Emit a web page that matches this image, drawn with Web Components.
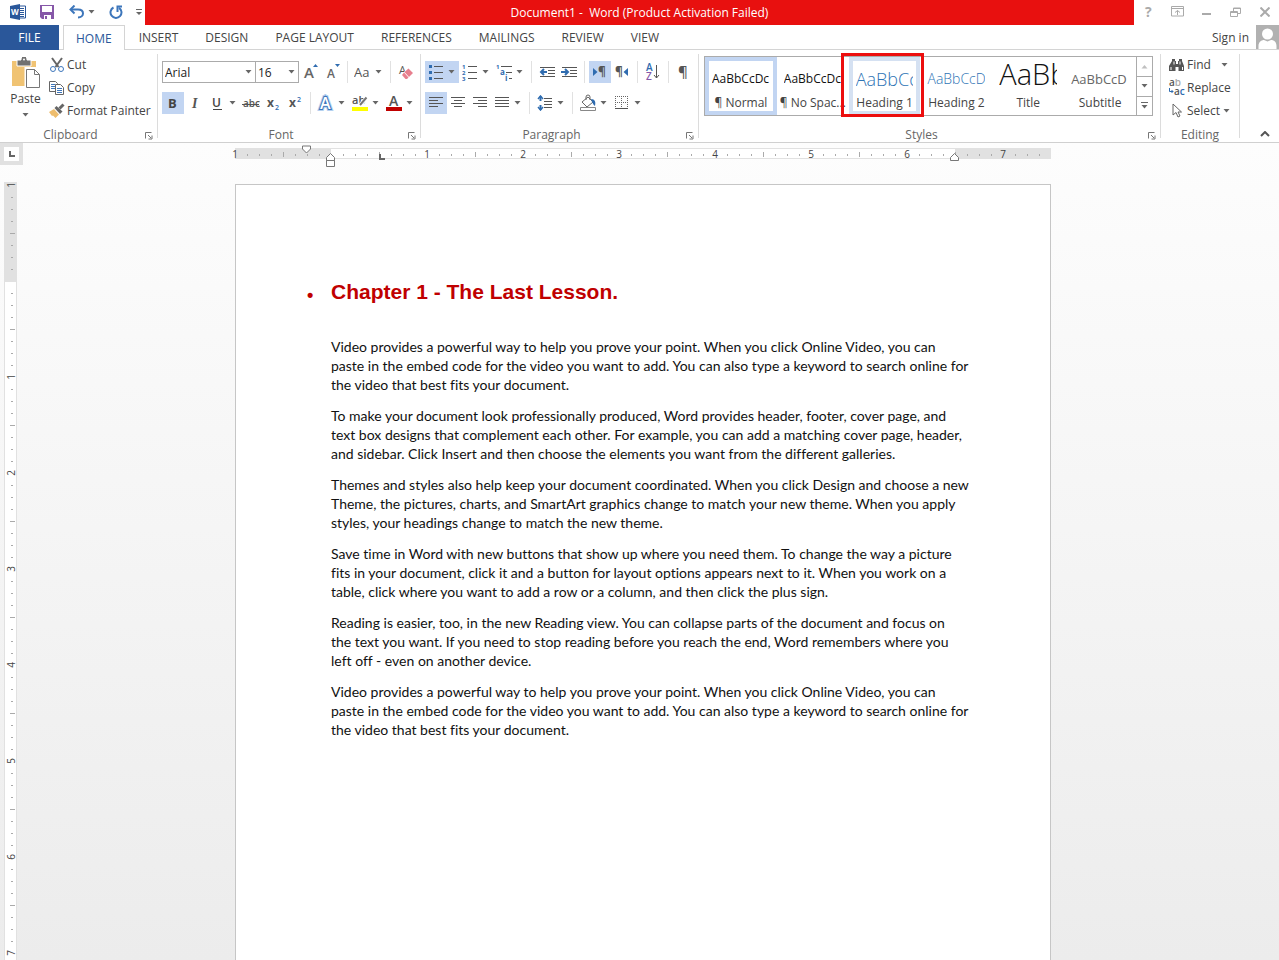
<!DOCTYPE html>
<html lang="en">
<head>
<meta charset="utf-8">
<title>Document1 - Word</title>
<style>
  html, body {
    margin: 0;
    height: 100%;
    overflow: hidden;
  }
  body {
    font-family: "Open Sans", "Noto Sans", sans-serif;
    font-size: 12px;
    color: #444;
    background: #fff;
  }
</style>
</head>
<body>
<word-window>
  <document-page>
    <span slot="heading">Chapter 1 - The Last Lesson.</span>
    <p>Video provides a powerful way to help you prove your point. When you click Online Video, you can<br>paste in the embed code for the video you want to add. You can also type a keyword to search online for<br>the video that best fits your document.</p>
    <p>To make your document look professionally produced, Word provides header, footer, cover page, and<br>text box designs that complement each other. For example, you can add a matching cover page, header,<br>and sidebar. Click Insert and then choose the elements you want from the different galleries.</p>
    <p>Themes and styles also help keep your document coordinated. When you click Design and choose a new<br>Theme, the pictures, charts, and SmartArt graphics change to match your new theme. When you apply<br>styles, your headings change to match the new theme.</p>
    <p>Save time in Word with new buttons that show up where you need them. To change the way a picture<br>fits in your document, click it and a button for layout options appears next to it. When you work on a<br>table, click where you want to add a row or a column, and then click the plus sign.</p>
    <p>Reading is easier, too, in the new Reading view. You can collapse parts of the document and focus on<br>the text you want. If you need to stop reading before you reach the end, Word remembers where you<br>left off - even on another device.</p>
    <p>Video provides a powerful way to help you prove your point. When you click Online Video, you can<br>paste in the embed code for the video you want to add. You can also type a keyword to search online for<br>the video that best fits your document.</p>
  </document-page>
</word-window>

<script>
(function() {
  // name: [width, height, svg content]
  const ICONS = {
    word: [16, 16, `<path d="M9 2h6.5v12H9z" fill="#fff" stroke="#2a579a"/><path d="M10 4.5h4M10 6.5h4M10 8.5h4M10 10.5h4M10 12.5h4" stroke="#2a579a"/><path d="M0 2l10-2v16L0 14z" fill="#2a579a"/><text x="1" y="11" font-size="8" font-weight="700" fill="#fff">W</text>`],
    save: [14, 14, `<path d="M0 0h14v14H2l-2-2z" fill="#8657a8"/><path d="M2 1h10v6H2zM4 10h7v4H4z" fill="#fff"/><path d="M5 11h2v3H5z" fill="#8657a8"/>`],
    undo: [16, 14, `<path d="M2 4.500h7c3.500 0 5 2 5 4s-2 4-5 4" fill="none" stroke="#3d76bb" stroke-width="2"/><path d="M5.500 0.500L1.500 4.500l4 4" fill="none" stroke="#3d76bb" stroke-width="2"/>`],
    redo: [14, 14, `<path d="M4.500 2.500a5.500 5.500 0 1 0 5.500 .3" fill="none" stroke="#3d76bb" stroke-width="2"/><path d="M13 1.500H8.500V7" fill="none" stroke="#3d76bb" stroke-width="2"/>`],
    customize: [7, 8, `<path d="M0 1.500h6" stroke="#666"/><path d="M0 4h6L3 7z" fill="#666"/>`],
    help: [12, 20, `<text x="2" y="15" font-size="14" font-weight="700" fill="#aaa">?</text>`],
    display: [13, 11, `<path d="M.5.5h12v9.500H.5zM.5 2.500h12" fill="none" stroke="#aaa"/><path d="M6.500 9V4.500M4 6.500l2.500-2 2.500 2" fill="none" stroke="#aaa"/>`],
    minimize: [10, 10, `<path d="M0 7h9" stroke="#aaa" stroke-width="2"/>`],
    restore: [11, 10, `<path d="M.5 4.500h7v5h-7zM.5 5.500h7M3.500 4V1h7v5.500H8M3.500 1.500h7" fill="none" stroke="#aaa"/>`],
    close: [10, 10, `<path d="M.5.500l9 9m0-9l-9 9" stroke="#aaa" stroke-width="2"/>`],
    avatar: [23, 24, `<path d="M0 0h23v24H0z" fill="#b1b1b1"/><circle cx="11.500" cy="9" r="5.500" fill="#fff"/><path d="M2.500 24v-3c0-4 3-6 5.500-6l3.500 1.500L15 15c3 0 5.500 2 5.500 6v3z" fill="#fff"/>`],
    paste: [30, 32, `<path d="M1 4h24v25H1z" fill="#f0c373"/><path d="M6 3h4V2a2.500 2.500 0 0 1 6 0v1h4v6H6z" fill="#717171" stroke="#fff"/><circle cx="13" cy="2.500" r="1" fill="#fff"/><path d="M15 11.500h9l5 5v14H15z" fill="#fff" stroke="#fff" stroke-width="3"/><path d="M15.500 12.500h8l5 5v13h-13zM23.500 12.500v5h5" fill="#fff" stroke="#777"/>`],
    cut: [16, 16, `<path d="M3 1l6.500 9M13 1L6.500 10" stroke="#666" stroke-width="2"/><circle cx="4" cy="12" r="2.500" fill="none" stroke="#3d76bb"/><circle cx="12" cy="12" r="2.500" fill="none" stroke="#3d76bb"/>`],
    copy: [16, 16, `<path d="M.500 1.500h6l2 2v8h-8z" fill="#fff" stroke="#666"/><path d="M2 4.500h4M2 6.500h4M2 8.500h4" stroke="#3d76bb"/><path d="M6.500 4.500h5l3 3v7h-8z" fill="#fff" stroke="#666"/><path d="M8 8.500h5M8 10.500h5M8 12.500h5" stroke="#3d76bb"/>`],
    painter: [16, 16, `<path d="M0 9l5-3 5 5.500L6.500 15 4 12.500l-1 .500z" fill="#eebd6d"/><path d="M5.500 5l2-2 6 5.500-2.500 2.500z" fill="#666"/><path d="M10.500 5.500l4-4" stroke="#666" stroke-width="3"/>`],
    grow: [18, 18, `<text x="3" y="15" font-size="15" font-weight="600" fill="#666">A</text><path d="M12 4h5l-2.500-3z" fill="#2f6cb0"/>`],
    shrink: [18, 18, `<text x="4" y="15" font-size="12" font-weight="600" fill="#666">A</text><path d="M12 1h5l-2.500 3z" fill="#2f6cb0"/>`],
    changecase: [18, 18, `<text x="0" y="14" font-size="13" fill="#555">Aa</text>`],
    eraser: [16, 16, `<text x="1" y="10" font-size="11" fill="#555">A</text><path d="M10 4l5 4-6 7-5-5z" fill="#fff"/><path d="M10.500 4.500l4.500 4.500-4 4-4.500-5zM6 8.500L10.500 13.500 9 15H7.500L4 11z" fill="#e77f8e"/>`],
    bold: [16, 16, `<text x="3" y="13" font-size="13" font-weight="700" fill="#444">B</text>`],
    italic: [16, 16, `<text x="5" y="13" font-size="14" font-style="italic" font-family="Liberation Serif" font-weight="700" fill="#555">I</text>`],
    underline: [16, 16, `<text x="3" y="12" font-size="12" font-weight="600" fill="#444">U</text><path d="M4 14.500h9" stroke="#444"/>`],
    strike: [18, 16, `<text x="1" y="12" font-size="10" font-weight="600" fill="#555">abc</text><path d="M0 9.500h17" stroke="#555"/>`],
    sub: [16, 18, `<text x="2" y="13" font-size="12" font-weight="700" fill="#555">x</text><text x="10" y="16" font-size="7" font-weight="600" fill="#2f6cb0">2</text>`],
    sup: [16, 16, `<text x="2" y="12" font-size="12" font-weight="700" fill="#555">x</text><text x="10" y="7" font-size="7" font-weight="600" fill="#2f6cb0">2</text>`],
    effects: [18, 18, `<text x="3" y="15" font-size="16" font-weight="600" fill="#fff" stroke="#b5d0ef" stroke-width="4" paint-order="stroke">A</text><text x="3" y="15" font-size="16" font-weight="600" fill="#fff" stroke="#3d76bb" stroke-width="2" paint-order="stroke">A</text>`],
    highlight: [18, 18, `<text x="1" y="10" font-size="11" font-weight="600" fill="#555">ab</text><path d="M15.500 4L9 11" stroke="#fff" stroke-width="4"/><path d="M15.500 3.500L9 11" stroke="#777" stroke-width="2"/><path d="M1 13h16v4H1z" fill="#ff0"/>`],
    fontcolor: [18, 18, `<text x="4" y="12" font-size="14" font-weight="600" fill="#555">A</text><path d="M1 13h16v4H1z" fill="#c00000"/>`],
    bullets: [16, 16, `<path d="M1 1h3v3H1zM1 7h3v3H1zM1 13h3v3H1z" fill="#2f6cb0"/><path d="M6 2.500h9M6 8.500h9M6 14.500h9" stroke="#555"/>`],
    numbers: [16, 18, `<text x="0" y="6" font-size="6" font-weight="700" fill="#2f6cb0">1</text><text x="0" y="12" font-size="6" font-weight="700" fill="#2f6cb0">2</text><text x="0" y="18" font-size="6" font-weight="700" fill="#2f6cb0">3</text><path d="M6 3.500h9M6 9.500h9M6 15.500h9" stroke="#555"/>`],
    multilevel: [17, 18, `<text x="0" y="6" font-size="6" font-weight="700" fill="#2f6cb0">1</text><text x="4" y="12" font-size="8" font-weight="700" fill="#2f6cb0">a</text><text x="9" y="18" font-size="8" font-weight="700" fill="#2f6cb0">i</text><path d="M5 3.500h11M10 9.500h6M13 15.500h3" stroke="#555"/>`],
    outdent: [17, 12, `<path d="M1 1.500h15M9 4.500h7M9 7.500h7M1 10.500h15" stroke="#555"/><path d="M8 6H2M5 3L2 6l3 3" fill="none" stroke="#2f6cb0" stroke-width="2"/>`],
    indent: [17, 12, `<path d="M1 1.500h15M9 4.500h7M9 7.500h7M1 10.500h15" stroke="#555"/><path d="M0 6h6M4 3l3 3-3 3" fill="none" stroke="#2f6cb0" stroke-width="2"/>`],
    ltr: [16, 18, `<path d="M1 5l4.500 4L1 13z" fill="#2f6cb0"/><text x="6" y="13" font-size="12" font-weight="700" fill="#555">¶</text>`],
    rtl: [16, 18, `<path d="M14 5L9.500 9l4.500 4z" fill="#2f6cb0"/><text x="1" y="13" font-size="12" font-weight="700" fill="#555">¶</text>`],
    sort: [16, 18, `<text x="1" y="8" font-size="10" font-weight="600" fill="#2f6cb0">A</text><text x="1" y="17" font-size="10" font-weight="600" fill="#8657a8">Z</text><path d="M11.500 2v13M9 12l2.500 3 2.500-3" fill="none" stroke="#555"/>`],
    pilcrow: [14, 20, `<text x="1" y="15" font-size="15" font-weight="600" fill="#555">¶</text>`],
    left: [16, 12, `<path d="M1 .500h14M1 3.500h9M1 6.500h14M1 9.500h9" stroke="#555"/>`],
    center: [16, 12, `<path d="M1 .500h14M4 3.500h8M1 6.500h14M4 9.500h8" stroke="#555"/>`],
    right: [16, 12, `<path d="M1 .500h14M6 3.500h9M1 6.500h14M6 9.500h9" stroke="#555"/>`],
    justify: [16, 12, `<path d="M1 .500h14M1 3.500h14M1 6.500h14M1 9.500h14" stroke="#555"/>`],
    spacing: [16, 16, `<path d="M7 3.500h8M7 6.500h8M7 9.500h8M7 12.500h8" stroke="#555"/><path d="M3.500 1v5M3.500 10v5" stroke="#2f6cb0" stroke-width="2"/><path d="M1 4l2.500-3L6 4M1 12l2.500 3L6 12" fill="none" stroke="#2f6cb0" stroke-width="1.500"/>`],
    shading: [18, 18, `<path d="M3 8l6-5 5 5-6 5z" fill="#fff" stroke="#666"/><path d="M7 6V3a2 2 0 0 1 4 0v3" fill="none" stroke="#666"/><path d="M12 5c4 0 5 3 4 7-2-1-2-3-3-4z" fill="#2f6cb0"/><path d="M1.500 13.500h15v3h-15z" fill="#fff" stroke="#888"/>`],
    borders: [14, 14, `<path d="M.500 0v13M6.500 0v13M12.500 0v13M0 .500h13M0 6.500h13" stroke="#666" stroke-dasharray="1 1"/><path d="M0 12.500h13" stroke="#555"/>`],
    find: [16, 14, `<path d="M3 1h3v2h1v3h2V3h1V1h3v2l2 5v5H9.500V9h-3v4H0V8l3-5z" fill="#555"/><path d="M2 9v3M13.500 9v3M5 3.500v3M11 3.500v3" stroke="#fff"/>`],
    replace: [18, 18, `<text x="1" y="7" font-size="10" font-weight="600" fill="#555">a<tspan fill="#aaa">b</tspan></text><text x="6" y="16" font-size="10" font-weight="600" fill="#555">a<tspan fill="#2f6cb0">c</tspan></text><path d="M1.500 9v3.500H5M3.500 11L5 12.500 3.500 14" fill="none" stroke="#2f6cb0"/>`],
    select: [10, 15, `<path d="M1 1v11l3-2.500L6 14l2-1-2-4h3.500z" fill="#fff" stroke="#666"/>`],
    arrow: [7, 4, `<path d="M.500 0h6l-3 3.500z" fill="#666"/>`],
    uparrow: [7, 4, `<path d="M.500 3.500h6L3.500 0z" fill="#c0c0c0"/>`],
    more: [7, 7, `<path d="M0 .500h7" stroke="#666"/><path d="M.500 3h6l-3 3.500z" fill="#666"/>`],
    launcher: [8, 8, `<path d="M.500 6.500v-6h6" fill="none" stroke="#777"/><path d="M3 3l3 3M7 3.500V7H3.500" fill="none" stroke="#777"/>`],
    collapse: [10, 6, `<path d="M1 5l4-4 4 4" fill="none" stroke="#555" stroke-width="2"/>`],
    tabstop: [6, 6, `<path d="M1 0v5h5" fill="none" stroke="#666" stroke-width="2"/>`]
  };

  function icon(name) {
    const [w, h, body] = ICONS[name];
    return `<svg class="icon" width="${w}" height="${h}" viewBox="0 0 ${w} ${h}" aria-hidden="true">${body}</svg>`;
  }

  class Base extends HTMLElement {
    constructor() {
      super();
      this.attachShadow({ mode: "open" });
    }

    connectedCallback() {
      this.shadowRoot.innerHTML = `
        <style>
          * { box-sizing: border-box; }
          button {
            font: inherit;
            color: inherit;
            background: none;
            border: 0;
            padding: 0;
            margin: 0;
            cursor: pointer;
          }
          svg { display: block; flex: none; }
        </style>` + this.render();
    }
  }

  // Small ribbon button, optionally with a drop-down arrow
  class ToolButton extends Base {
    render() {
      const menu = this.hasAttribute("menu") ? `<span class="menu">${icon("arrow")}</span>` : "";
      return `
        <style>
          :host { display: block; flex: none; }
          button { display: flex; align-items: center; height: 22px; }
          button:hover { background: #d5e1f2; }
          :host([pressed]) button { background: #c2d5f2; }
          .face { display: flex; width: 22px; justify-content: center; }
          .menu { width: 12px; padding-left: 1px; }
        </style>
        <button aria-label="${this.getAttribute("label")}">
          <span class="face">${icon(this.getAttribute("icon"))}</span>${menu}
        </button>`;
    }
  }

  // Icon followed by a caption
  class CaptionButton extends Base {
    render() {
      return `
        <style>
          :host { display: block; }
          button { display: flex; align-items: center; height: 23px; white-space: nowrap; }
          .face { display: flex; width: 20px; justify-content: center; }
          .menu { padding-left: var(--menu-gap, 3px); }
        </style>
        <button>
          <span class="face">${icon(this.getAttribute("icon"))}</span>
          <slot></slot>
          ${this.hasAttribute("menu") ? `<span class="menu">${icon("arrow")}</span>` : ""}
        </button>`;
    }
  }

  class ToolSeparator extends Base {
    render() {
      return `<style>:host { display: block; flex: none; width: 1px; height: 22px; margin: 0 4px; background: #e1e1e1; }</style>`;
    }
  }

  class ComboBox extends Base {
    render() {
      const value = this.getAttribute("value");
      return `
        <style>
          :host { display: grid; align-items: center; flex: none; }
          select, svg { grid-area: 1 / 1; }
          select {
            appearance: none;
            width: 100%;
            height: 22px;
            border: 1px solid #ababab;
            border-radius: 0;
            background: #fff;
            color: #222;
            font: inherit;
            padding: 0 2px;
          }
          svg { justify-self: end; margin-right: 4px; pointer-events: none; }
        </style>
        <select aria-label="${this.getAttribute("label")}"><option>${value}</option></select>
        ${icon("arrow")}`;
    }
  }

  class RibbonGroup extends Base {
    render() {
      const launcher = this.hasAttribute("launcher")
        ? `<button class="launcher" aria-label="${this.getAttribute("label")} settings">${icon("launcher")}</button>` : "";
      return `
        <style>
          :host { display: flex; flex: none; }
          .group { flex: 1; display: flex; flex-direction: column; min-width: 0; }
          .body { flex: 1; padding: 0 4px; }
          footer { display: flex; align-items: center; height: 16px; color: #666; }
          .name { flex: 1; text-align: center; }
          .launcher { width: 16px; height: 16px; padding: 3px 4px 0; }
          .line { width: 1px; margin: 4px 0; background: #dcdcdc; }
        </style>
        <div class="group">
          <div class="body"><slot></slot></div>
          <footer><span class="name">${this.getAttribute("label")}</span>${launcher}</footer>
        </div>
        <div class="line"></div>`;
    }
  }

  class StyleCard extends Base {
    render() {
      return `
        <style>
          :host { display: block; flex: 1; min-width: 0; }
          button {
            width: 100%;
            height: 58px;
            border: 4px solid transparent;
            display: flex;
            flex-direction: column;
            align-items: center;
          }
          :host([state=selected]) button { border-color: #c2d5f2; }
          :host([state=hover]) button { border-color: #d5e1f2; }
          .sample {
            align-self: stretch;
            margin: 0 3px;
            height: 34px;
            line-height: var(--sample-line, 36px);
            text-align: left;
            overflow: hidden;
            white-space: nowrap;
            color: var(--sample-color, #111);
            font-size: var(--sample-size, 12px);
            font-weight: var(--sample-weight, 400);
          }
          .name { line-height: 16px; white-space: nowrap; }
        </style>
        <button>
          <span class="sample">${this.getAttribute("sample")}</span>
          <span class="name"><slot></slot></span>
        </button>`;
    }
  }

  class StyleGallery extends Base {
    render() {
      return `
        <style>
          :host { display: flex; height: 60px; border: 1px solid #ababab; position: relative; }
          .cards { flex: 1; display: flex; min-width: 0; }
          .scroll { width: 16px; display: grid; grid-template-rows: repeat(3, 1fr); border-left: 1px solid #ababab; }
          .scroll button { display: grid; place-items: center; }
          .scroll button + button { border-top: 1px solid #ababab; }
          .callout {
            position: absolute;
            left: 136px;
            top: -4px;
            width: 83px;
            height: 64px;
            border: 3px solid #ec0e0e;
            pointer-events: none;
          }
        </style>
        <div class="cards"><slot></slot></div>
        <div class="scroll">
          <button aria-label="Scroll up">${icon("uparrow")}</button>
          <button aria-label="Scroll down">${icon("arrow")}</button>
          <button aria-label="More styles">${icon("more")}</button>
        </div>
        <div class="callout"></div>`;
    }
  }

  class TitleBar extends Base {
    render() {
      return `
        <style>
          :host { display: grid; grid-template-columns: 145px 1fr 145px; height: 25px; }
          .quick { display: flex; align-items: center; padding: 0 2px 2px 10px; }
          .quick .save { margin-left: 14px; }
          .quick .undo { margin-left: 15px; }
          .quick .list { margin-left: 3px; }
          .quick .redo { margin-left: 14px; }
          .quick .custom { margin-left: auto; }
          .title { background: #e8100f; color: #fff; display: grid; place-items: center; white-space: pre; }
          .controls { display: grid; grid-template-columns: repeat(5, 1fr); padding-bottom: 2px; }
          .controls button { display: grid; place-items: center; }
        </style>
        <div class="quick">
          ${icon("word")}
          <button class="save" aria-label="Save">${icon("save")}</button>
          <button class="undo" aria-label="Undo">${icon("undo")}</button>
          <button class="list" aria-label="Undo list">${icon("arrow")}</button>
          <button class="redo" aria-label="Repeat">${icon("redo")}</button>
          <button class="custom" aria-label="Customize">${icon("customize")}</button>
        </div>
        <div class="title">Document1 -  Word (Product Activation Failed)</div>
        <div class="controls">
          <button aria-label="Help">${icon("help")}</button>
          <button aria-label="Ribbon display">${icon("display")}</button>
          <button aria-label="Minimize">${icon("minimize")}</button>
          <button aria-label="Restore">${icon("restore")}</button>
          <button aria-label="Close">${icon("close")}</button>
        </div>`;
    }
  }

  class TabStrip extends Base {
    render() {
      const tabs = ["INSERT", "DESIGN", "PAGE LAYOUT", "REFERENCES", "MAILINGS", "REVIEW", "VIEW"];
      return `
        <style>
          :host { display: flex; height: 25px; box-shadow: inset 0 -1px #d4d4d4; }
          nav { flex: 1; display: flex; }
          nav button { padding: 0 13px 0 14px; }
          nav .file { width: 59px; background: #2a579a; color: #fff; margin-right: 4px; padding: 0; }
          nav .active { padding: 0 12px; background: #fff; color: #2a579a; border: 1px solid #d4d4d4; border-bottom: 0; }
          .user { display: flex; align-items: center; gap: 7px; }
          .user svg { align-self: flex-start; }
        </style>
        <nav>
          <button class="file">FILE</button>
          <button class="active">HOME</button>
          ${tabs.map(t => `<button>${t}</button>`).join("")}
        </nav>
        <button class="user">Sign in ${icon("avatar")}</button>`;
    }
  }

  class RibbonBar extends Base {
    render() {
      return `
        <style>
          :host { display: flex; height: 93px; border-bottom: 1px solid #d0d0d0; }
          .clipboard { width: 158px; }
          .font { width: 263px; }
          .paragraph { width: 278px; }
          .styles { flex: 1; min-width: 0; }
          .editing { width: 79px; }
          .clip { display: flex; padding-top: 3px; }
          .paste { width: 43px; display: flex; flex-direction: column; align-items: center; padding-top: 4px; line-height: 18px; }
          .paste svg + span { margin-top: 1px; }
          .paste span + svg { margin-top: 5px; }
          .row { display: flex; align-items: center; padding-top: 11px; }
          .row + .row { padding-top: 9px; }
          .stack { padding: 3px 0 0 2px; }
          style-gallery { margin: 6px 3px 0 1px; }
          .wide { width: 94px; }
          .narrow { width: 44px; margin-left: -1px; }
          .h1 { --sample-size: 18px; --sample-weight: 300; --sample-color: #2e74b5; }
          .h2 { --sample-size: 14px; --sample-weight: 300; --sample-color: #2e74b5; }
          .t { --sample-size: 29px; --sample-weight: 300; --sample-line: 26px; }
          .s { --sample-size: 13px; --sample-color: #666; }
          .find { --menu-gap: 10px; }
          .end { flex: none; width: 39px; display: flex; justify-content: flex-end; align-items: flex-end; padding: 0 9px 5px 0; }
        </style>
        <ribbon-group class="clipboard" label="Clipboard" launcher>
          <div class="clip">
            <button class="paste">${icon("paste")}<span>Paste</span>${icon("arrow")}</button>
            <div>
              <caption-button icon="cut">Cut</caption-button>
              <caption-button icon="copy">Copy</caption-button>
              <caption-button icon="painter">Format Painter</caption-button>
            </div>
          </div>
        </ribbon-group>
        <ribbon-group class="font" label="Font" launcher>
          <div class="row">
            <combo-box class="wide" label="Font" value="Arial"></combo-box>
            <combo-box class="narrow" label="Font size" value="16"></combo-box>
            <tool-button icon="grow" label="Grow font"></tool-button>
            <tool-button icon="shrink" label="Shrink font"></tool-button>
            <tool-separator></tool-separator>
            <tool-button icon="changecase" label="Change case" menu></tool-button>
            <tool-separator></tool-separator>
            <tool-button icon="eraser" label="Clear formatting"></tool-button>
          </div>
          <div class="row">
            <tool-button icon="bold" label="Bold" pressed></tool-button>
            <tool-button icon="italic" label="Italic"></tool-button>
            <tool-button icon="underline" label="Underline" menu></tool-button>
            <tool-button icon="strike" label="Strikethrough"></tool-button>
            <tool-button icon="sub" label="Subscript"></tool-button>
            <tool-button icon="sup" label="Superscript"></tool-button>
            <tool-separator></tool-separator>
            <tool-button icon="effects" label="Text effects" menu></tool-button>
            <tool-button icon="highlight" label="Highlight" menu></tool-button>
            <tool-button icon="fontcolor" label="Font color" menu></tool-button>
          </div>
        </ribbon-group>
        <ribbon-group class="paragraph" label="Paragraph" launcher>
          <div class="row">
            <tool-button icon="bullets" label="Bullets" menu pressed></tool-button>
            <tool-button icon="numbers" label="Numbering" menu></tool-button>
            <tool-button icon="multilevel" label="Multilevel list" menu></tool-button>
            <tool-separator></tool-separator>
            <tool-button icon="outdent" label="Decrease indent"></tool-button>
            <tool-button icon="indent" label="Increase indent"></tool-button>
            <tool-separator></tool-separator>
            <tool-button icon="ltr" label="Left to right" pressed></tool-button>
            <tool-button icon="rtl" label="Right to left"></tool-button>
            <tool-separator></tool-separator>
            <tool-button icon="sort" label="Sort"></tool-button>
            <tool-separator></tool-separator>
            <tool-button icon="pilcrow" label="Show marks"></tool-button>
          </div>
          <div class="row">
            <tool-button icon="left" label="Align left" pressed></tool-button>
            <tool-button icon="center" label="Center"></tool-button>
            <tool-button icon="right" label="Align right"></tool-button>
            <tool-button icon="justify" label="Justify" menu></tool-button>
            <tool-separator></tool-separator>
            <tool-button icon="spacing" label="Line spacing" menu></tool-button>
            <tool-separator></tool-separator>
            <tool-button icon="shading" label="Shading" menu></tool-button>
            <tool-button icon="borders" label="Borders" menu></tool-button>
          </div>
        </ribbon-group>
        <ribbon-group class="styles" label="Styles" launcher>
          <style-gallery>
            <style-card sample="AaBbCcDc" state="selected">¶ Normal</style-card>
            <style-card sample="AaBbCcDc">¶ No Spac...</style-card>
            <style-card class="h1" sample="AaBbCc" state="hover">Heading 1</style-card>
            <style-card class="h2" sample="AaBbCcD">Heading 2</style-card>
            <style-card class="t" sample="AaBb">Title</style-card>
            <style-card class="s" sample="AaBbCcD">Subtitle</style-card>
          </style-gallery>
        </ribbon-group>
        <ribbon-group class="editing" label="Editing">
          <div class="stack">
            <caption-button class="find" icon="find" menu>Find</caption-button>
            <caption-button icon="replace">Replace</caption-button>
            <caption-button icon="select" menu>Select</caption-button>
          </div>
        </ribbon-group>
        <button class="end" aria-label="Collapse ribbon">${icon("collapse")}</button>`;
    }
  }

  // One inch is 96px, with a tick every eighth
  class HorizontalRuler extends Base {
    render() {
      let numbers = "";
      let ticks = "";
      for (let i = 0; i <= 67; i++) {
        const x = i * 12;
        const inch = i / 8 - 1;
        if (inch === 0) continue;
        if (Number.isInteger(inch)) {
          numbers += `<text x="${x}" y="10" text-anchor="middle">${Math.abs(inch)}</text>`;
        } else {
          ticks += i % 4 === 0 ? `M${x}.5 4v5` : `M${x}.5 6v2`;
        }
      }
      return `
        <style>
          :host { display: block; width: 816px; }
          svg { overflow: visible; font-size: 10px; fill: #444; }
        </style>
        <svg width="816" height="20" viewBox="0 0 816 20">
          <path d="M0 0h816v11H0z" fill="#e1e1e1"/>
          <path d="M96 0h624v11H96z" fill="#fff"/>
          <path d="M96 .5h624M96 10.500h624" stroke="#e1e1e1"/>
          ${numbers}
          <path d="${ticks}" stroke="#aaa"/>
          <path d="M68-2.500h8v3l-4 4-4-4zM92 12v-3l4-4 4 4v3zM92 12h8v6h-8zM716 12v-3l4-4 4 4v3z" transform="translate(-.5 .5)" fill="#fff" stroke="#777"/>
          <path d="M145 6v5h5" fill="none" stroke="#666" stroke-width="2"/>
        </svg>`;
    }
  }

  class VerticalRuler extends Base {
    render() {
      let marks = "";
      for (let i = 0; i <= 80; i++) {
        const y = 3 + i * 12;
        const inch = i / 8 - 1;
        if (inch === 0) continue;
        if (Number.isInteger(inch)) {
          marks += `<text transform="translate(11 ${y}) rotate(-90)" text-anchor="middle">${Math.abs(inch)}</text>`;
        } else {
          marks += i % 4 === 0 ? `<path d="M6 ${y}.5h5" stroke="#aaa"/>` : `<path d="M7 ${y}.5h2" stroke="#aaa"/>`;
        }
      }
      return `
        <style>
          :host { display: block; overflow: hidden; }
          svg { font-size: 10px; fill: #444; }
        </style>
        <svg width="13" height="1000" viewBox="0 0 13 1000">
          <path d="M0 0h13v1000H0z" fill="#fff"/>
          <path d="M.5 0v1000M12.500 0v1000" stroke="#e1e1e1"/>
          <path d="M0 0h13v100H0z" fill="#e1e1e1"/>
          ${marks}
        </svg>`;
    }
  }

  class DocumentPage extends Base {
    render() {
      return `
        <style>
          :host {
            display: block;
            box-sizing: border-box;
            width: 816px;
            min-height: 1056px;
            padding: 92px 95px;
            border: 1px solid #c6c6c6;
            background: #fff;
            color: #111;
            font-family: Lato, sans-serif;
            font-size: 14px;
            line-height: 19px;
            font-variant-ligatures: none;
            white-space: nowrap;
          }
          h1 {
            display: flex;
            height: 30px;
            margin: 0 0 30px -24px;
            font: bold 21px/30px "Liberation Sans", Arial, sans-serif;
            color: #c00000;
          }
          .dot { width: 24px; font-size: 18px; line-height: 36px; }
          ::slotted(p) { margin: 0 0 12px; }
        </style>
        <h1><span class="dot">•</span><slot name="heading"></slot></h1>
        <slot></slot>`;
    }
  }

  class WordWindow extends Base {
    render() {
      return `
        <style>
          :host { display: flex; flex-direction: column; height: 100vh; overflow: hidden; }
          .workspace {
            flex: 1;
            min-height: 0;
            display: grid;
            grid-template: 39px 1fr / 23px 1fr 16px;
            background: linear-gradient(#fdfdfd, #ececec);
          }
          .corner {
            width: 23px;
            height: 22px;
            border: 4px solid #e1e1e1;
            background: #fff;
            display: grid;
            place-items: center;
          }
          horizontal-ruler { justify-self: center; margin-top: 5px; }
          vertical-ruler { margin-left: 4px; }
          .canvas { display: flex; justify-content: center; align-items: flex-start; padding-top: 2px; min-height: 0; overflow: hidden; }
        </style>
        <title-bar></title-bar>
        <tab-strip></tab-strip>
        <ribbon-bar></ribbon-bar>
        <div class="workspace">
          <button class="corner" aria-label="Tab stop">${icon("tabstop")}</button>
          <horizontal-ruler></horizontal-ruler>
          <span></span>
          <vertical-ruler></vertical-ruler>
          <main class="canvas"><slot></slot></main>
        </div>`;
    }
  }

  customElements.define("tool-button", ToolButton);
  customElements.define("caption-button", CaptionButton);
  customElements.define("tool-separator", ToolSeparator);
  customElements.define("combo-box", ComboBox);
  customElements.define("ribbon-group", RibbonGroup);
  customElements.define("style-card", StyleCard);
  customElements.define("style-gallery", StyleGallery);
  customElements.define("title-bar", TitleBar);
  customElements.define("tab-strip", TabStrip);
  customElements.define("ribbon-bar", RibbonBar);
  customElements.define("horizontal-ruler", HorizontalRuler);
  customElements.define("vertical-ruler", VerticalRuler);
  customElements.define("document-page", DocumentPage);
  customElements.define("word-window", WordWindow);
})();
</script>
</body>
</html>
